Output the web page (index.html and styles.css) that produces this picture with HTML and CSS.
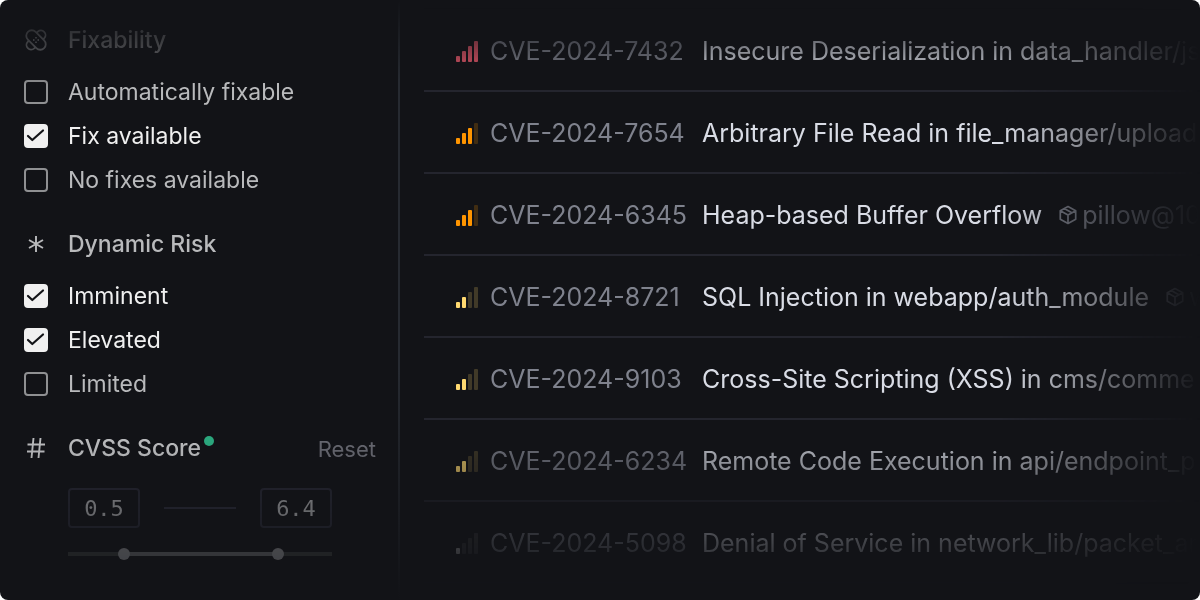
FILE: index.html
```html
<!DOCTYPE html>
<html lang="en">

<head>
    <meta charset="utf-8">
    <meta name="viewport" content="width=device-width, initial-scale=1">
    <title>Vulnerabilities</title>
    <link rel="stylesheet" href="styles.css">
</head>

<body>
    <!-- Shared icons -->
    <svg class="sprite" aria-hidden="true">
        <symbol id="check" viewBox="0 0 24 24">
            <path d="M4 12l4.300 4L19 6.500" fill="none" stroke="#121317" stroke-width="2.200" stroke-linecap="round" stroke-linejoin="round" />
        </symbol>
        <symbol id="package" viewBox="0 0 20 20">
            <path d="M10 1.500l7.700 4.200v8.600L10 18.500l-7.700-4.200V5.700zM2.300 5.700L10 10l7.700-4.300M10 10v8.500M6.200 3.600l7.700 4.200" fill="none" stroke="currentColor" stroke-width="1.700" stroke-linejoin="round" />
        </symbol>
    </svg>

    <div class="card">
        <!-- Filters -->
        <aside class="filters">
            <section class="group">
                <h2 class="heading">
                    <svg class="icon" viewBox="0 0 24 24" fill="none" stroke="currentColor" stroke-width="1.800">
                        <rect x="6.500" y="0.500" width="11" height="23" rx="5.500" transform="rotate(-45 12 12)" />
                        <path d="M12.500 5l1.300-1.300a4.600 4.600 0 0 1 6.500 6.500L19 11.500M11.500 19l-1.300 1.300a4.600 4.600 0 0 1-6.500-6.500L5 12.500" />
                        <path d="M12 9v1.500M12 13.500V15M9 12h1.500M13.500 12H15" />
                    </svg>
                    Fixability
                </h2>
                <label class="option">
                    <span class="tick"><input type="checkbox"><svg><use href="#check" /></svg></span>
                    <span>Automatically fixable</span>
                </label>
                <label class="option">
                    <span class="tick"><input type="checkbox" checked><svg><use href="#check" /></svg></span>
                    <span>Fix available</span>
                </label>
                <label class="option">
                    <span class="tick"><input type="checkbox"><svg><use href="#check" /></svg></span>
                    <span>No fixes available</span>
                </label>
            </section>

            <section class="group">
                <h2 class="heading">
                    <svg class="icon" viewBox="0 0 24 24" fill="none" stroke="currentColor" stroke-width="1.900">
                        <path d="M12 4v16M5 8l14 8M5 16l14-8" />
                    </svg>
                    Dynamic Risk
                </h2>
                <label class="option">
                    <span class="tick"><input type="checkbox" checked><svg><use href="#check" /></svg></span>
                    <span>Imminent</span>
                </label>
                <label class="option">
                    <span class="tick"><input type="checkbox" checked><svg><use href="#check" /></svg></span>
                    <span>Elevated</span>
                </label>
                <label class="option">
                    <span class="tick"><input type="checkbox"><svg><use href="#check" /></svg></span>
                    <span>Limited</span>
                </label>
            </section>

            <section class="group">
                <div class="heading-row">
                    <h2 class="heading">
                        <svg class="icon" viewBox="0 0 24 24" fill="none" stroke="currentColor" stroke-width="1.900">
                            <path d="M9.500 2L7.500 22M16.500 2l-2 20M3.500 8.500H21M3 15.500h17.500" />
                        </svg>
                        <span class="changed">CVSS Score</span>
                    </h2>
                    <button class="reset" type="button">Reset</button>
                </div>
                <div class="score">
                    <div class="score-values">
                        <input type="text" value="0.5" aria-label="Lowest score">
                        <span class="dash"></span>
                        <input type="text" value="6.4" aria-label="Highest score">
                    </div>
                    <div class="slider">
                        <input type="range" min="0" max="100" value="20" aria-label="Lowest score">
                        <input type="range" min="0" max="100" value="81" aria-label="Highest score">
                    </div>
                </div>
            </section>
        </aside>

        <div class="divider"></div>

        <!-- Issues -->
        <ul class="issues">
            <li class="issue critical">
                <span class="bars"><i></i><i></i><i></i><i></i></span>
                <span class="cve">CVE-2024-7432</span>
                <span class="title">Insecure Deserialization in data_handler/js</span>
            </li>
            <li class="issue high">
                <span class="bars"><i></i><i></i><i></i><i></i></span>
                <span class="cve">CVE-2024-7654</span>
                <span class="title">Arbitrary File Read in file_manager/upload</span>
            </li>
            <li class="issue high">
                <span class="bars"><i></i><i></i><i></i><i></i></span>
                <span class="cve">CVE-2024-6345</span>
                <span class="title">Heap-based Buffer Overflow</span>
                <span class="package"><svg><use href="#package" /></svg>pillow@10</span>
            </li>
            <li class="issue medium">
                <span class="bars"><i></i><i></i><i></i><i></i></span>
                <span class="cve">CVE-2024-8721</span>
                <span class="title">SQL Injection in webapp/auth_module</span>
                <span class="package"><svg><use href="#package" /></svg>w</span>
            </li>
            <li class="issue medium">
                <span class="bars"><i></i><i></i><i></i><i></i></span>
                <span class="cve">CVE-2024-9103</span>
                <span class="title">Cross-Site Scripting (XSS) in cms/comme</span>
            </li>
            <li class="issue medium">
                <span class="bars"><i></i><i></i><i></i><i></i></span>
                <span class="cve">CVE-2024-6234</span>
                <span class="title">Remote Code Execution in api/endpoint_p</span>
            </li>
            <li class="issue low">
                <span class="bars"><i></i><i></i><i></i><i></i></span>
                <span class="cve">CVE-2024-5098</span>
                <span class="title">Denial of Service in network_lib/packet_an</span>
            </li>
        </ul>
    </div>
</body>

</html>
```
FILE: styles.css
```css
* {
    box-sizing: border-box;
}

body {
    margin: 0;
    background: #fff;
    font-family: Inter, "Liberation Sans", sans-serif;
}

.sprite {
    display: none;
}

.card {
    display: grid;
    grid-template-columns: 398px 2px minmax(0, 1fr);
    min-height: 100vh;
    overflow: hidden;
    border-radius: 8px;
    background: #121317;
}

/* Filters */
.filters {
    padding: 10px 22px 0 24px;
    font-size: 23px;
    line-height: 32px;
    color: #b9babc;
    mask-image: linear-gradient(transparent, rgba(0, 0, 0, 0.16) 28px, rgba(0, 0, 0, 0.32) 52px, #000 84px, #000 440px, rgba(0, 0, 0, 0.4) 600px);
}

.group + .group {
    margin-top: 12px;
}

.heading {
    display: flex;
    align-items: center;
    gap: 20px;
    height: 60px;
    margin: 0;
    font-size: 23px;
    font-weight: 500;
}

.icon {
    width: 24px;
    height: 24px;
}

.heading-row {
    display: flex;
    align-items: center;
    justify-content: space-between;
}

.changed {
    display: flex;
    gap: 3px;
}

.changed::after {
    content: "";
    width: 10px;
    height: 10px;
    margin-top: 4px;
    border-radius: 50%;
    background: #2ba77d;
}

.reset {
    padding: 2px 0 0;
    border: 0;
    background: none;
    font: 22px/28px Inter, sans-serif;
    color: #65666e;
}

.option {
    display: flex;
    align-items: center;
    gap: 20px;
    height: 44px;
}

.option:has(:checked) {
    color: #f0f0f0;
}

.tick {
    display: grid;
}

.tick > * {
    grid-area: 1 / 1;
    width: 24px;
    height: 24px;
    margin: 0;
}

.tick input {
    appearance: none;
    border: 2px solid #8f9092;
    border-radius: 4px;
}

.tick input:checked {
    border-color: #f0f0f0;
    background: #f0f0f0;
}

.tick svg {
    visibility: hidden;
    pointer-events: none;
}

.tick input:checked + svg {
    visibility: visible;
}

.score {
    width: 264px;
    margin: 10px 0 0 44px;
}

.score-values {
    display: flex;
    align-items: center;
    gap: 24px;
}

.score-values input {
    width: 72px;
    height: 40px;
    padding: 0;
    border: 2px solid #23242e;
    border-radius: 4px;
    background: none;
    font: 22px "DejaVu Sans Mono", monospace;
    text-align: center;
    color: #86878a;
}

.dash {
    flex: 1;
    height: 2px;
    background: #262732;
}

.slider {
    position: relative;
    height: 12px;
    margin-top: 20px;
    background: linear-gradient(90deg, #2c2d30 21%, #4e4f53 21%, #4e4f53 80%, #2c2d30 80%) center / 100% 4px no-repeat;
}

.slider input {
    position: absolute;
    inset: 0;
    width: 100%;
    height: 12px;
    margin: 0;
    appearance: none;
    background: none;
    pointer-events: none;
}

.slider input::-webkit-slider-thumb {
    appearance: none;
    width: 12px;
    height: 12px;
    border-radius: 50%;
    background: #6a6b6f;
    pointer-events: auto;
}

.divider {
    background: linear-gradient(transparent, #262a31 80px, #262a31 370px, transparent);
}

/* Issues */
.issues {
    margin: 0;
    padding: 8px 0 0 24px;
    overflow: hidden;
    list-style: none;
    font-size: 25px;
    line-height: 32px;
    mask-image: linear-gradient(transparent 8px, #000 80px, #000 420px, rgba(0, 0, 0, 0.64) 461px, rgba(0, 0, 0, 0.3) 530px, transparent 590px), linear-gradient(90deg, #000 600px, transparent 800px);
    mask-composite: intersect;
}

.issue {
    display: grid;
    grid-template-columns: 22px 200px max-content max-content;
    align-items: center;
    column-gap: 12px;
    height: 82px;
    padding: 2px 0 0 32px;
    border-top: 2px solid #24252e;
    white-space: nowrap;
}

.issue:last-child {
    height: 84px;
    border-bottom: 2px solid #24252e;
}

.cve {
    color: #7f828d;
}

.title {
    color: #d9dce5;
}

.package {
    display: flex;
    align-items: center;
    gap: 4px;
    padding-left: 4px;
    color: #7f828d;
}

.package svg {
    width: 20px;
    height: 20px;
}

/* Severity bars */
.bars {
    display: flex;
    align-items: flex-end;
    gap: 2px;
    height: 22px;
}

.bars i {
    width: 4px;
    height: 6px;
    border-radius: 1px;
    background: currentColor;
}

.bars i:nth-child(2) {
    height: 11px;
}

.bars i:nth-child(3) {
    height: 16px;
}

.bars i:nth-child(4) {
    height: 21px;
}

.critical {
    color: #e5586a;
}

.high {
    color: #ff9500;
}

.medium {
    color: #ffd970;
}

.low {
    color: #c8c8cc;
}

.high i:nth-child(n + 4),
.medium i:nth-child(n + 3),
.low i:nth-child(n + 2) {
    opacity: 0.2;
}
```
